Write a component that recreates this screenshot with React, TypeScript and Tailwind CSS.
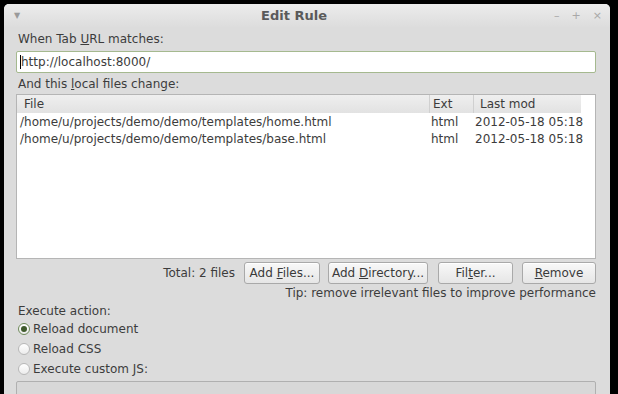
import React from "react"

const font = { fontFamily: '"DejaVu Sans", Verdana, sans-serif' }

function Btn({ children, w }: { children: React.ReactNode; w: string }) {
  return (
    <button
      className={`${w} h-[22px] shrink-0 whitespace-nowrap rounded-[3px] border border-[#a9a9a9] bg-gradient-to-b from-[#f8f8f8] to-[#e6e6e6] text-[12px] text-[#3a3a3a] leading-none shadow-[inset_0_1px_0_#fff]`}
    >
      {children}
    </button>
  )
}

function Radio({ checked, label }: { checked?: boolean; label: string }) {
  return (
    <div className="flex items-center h-[20px] gap-[3px]">
      <span
        className={`w-[12px] h-[12px] rounded-full border flex items-center justify-center bg-gradient-to-b from-[#ffffff] to-[#ececec] ${
          checked ? "border-[#6f8a5a]" : "border-[#b8b8b8]"
        }`}
      >
        {checked && <span className="w-[6px] h-[6px] rounded-full bg-[#3f5a2c]" />}
      </span>
      <span>{label}</span>
    </div>
  )
}

export default function App() {
  return (
    <div className="w-[618px] h-[394px] bg-black overflow-hidden pl-[4px] pt-[4px]" style={font}>
      <div className="w-[606px] h-[390px] bg-[#dcdcdc] rounded-t-[5px] flex flex-col text-[12px] text-[#3c3c3c]">
        {/* Title bar */}
        <div className="h-[24px] shrink-0 flex items-center pl-[10px] pr-[8px] rounded-t-[5px] bg-gradient-to-b from-[#ececec] to-[#dcdcdc]">
          <span className="w-[20px] text-[8px] text-[#9a9a9a]">▼</span>
          <div className="flex-1 text-center font-bold text-[13px] text-[#5a5a5a]">Edit Rule</div>
          <div className="flex gap-[12px] text-[11px] text-[#a8a8a8]">
            <span>–</span>
            <span>+</span>
            <span>×</span>
          </div>
        </div>

        <div className="flex flex-col pl-[12px] pr-[14px]">
          <div className="mt-[3px] h-[16px] leading-[16px] pl-[2px]">
            When Tab <u>U</u>RL matches:
          </div>
          <div className="mt-[4px] h-[22px] rounded-[2px] border border-[#a5b98f] bg-white flex items-center px-[3px]">
            <span className="w-px h-[14px] bg-black" />
            http://localhost:8000/
          </div>
          <div className="mt-[3px] h-[16px] leading-[16px] pl-[2px]">
            And this <u>l</u>ocal files change:
          </div>

          {/* File list */}
          <div className="mt-[2px] h-[165px] border border-[#b5b5b5] bg-white flex flex-col">
            <div className="h-[18px] flex items-center bg-gradient-to-b from-[#efefef] to-[#e2e2e2] mr-[14px]">
              <div className="flex-1 pl-[7px] border-r border-[#d0d0d0] h-full flex items-center">File</div>
              <div className="w-[44px] pl-[3px] border-r border-[#d0d0d0] h-full flex items-center">Ext</div>
              <div className="w-[107px] pl-[6px] h-full flex items-center">Last mod</div>
            </div>
            {[
              "/home/u/projects/demo/demo/templates/home.html",
              "/home/u/projects/demo/demo/templates/base.html",
            ].map((f) => (
              <div key={f} className="h-[17px] flex items-center mr-[14px] whitespace-nowrap">
                <div className="flex-1 pl-[3px]">{f}</div>
                <div className="w-[44px] pl-[1px]">html</div>
                <div className="w-[107px] pl-[1px]">2012-05-18 05:18</div>
              </div>
            ))}
          </div>

          {/* Buttons */}
          <div className="mt-[3px] flex items-center justify-end">
            <span className="mr-[9px]">Total: 2 files</span>
            <Btn w="w-[76px] mr-[8px]">
              Add <u>F</u>iles...
            </Btn>
            <Btn w="w-[100px] mr-[10px]">
              Add <u>D</u>irectory...
            </Btn>
            <Btn w="w-[75px] mr-[9px]">
              Fil<u>t</u>er...
            </Btn>
            <Btn w="w-[74px]">
              <u>R</u>emove
            </Btn>
          </div>
          <div className="mt-[1px] h-[16px] leading-[16px] text-right">
            Tip: remove irrelevant files to improve performance
          </div>

          <div className="mt-[2px] h-[16px] leading-[16px] pl-[2px]">Execute action:</div>
          <div className="flex flex-col pl-[2px]">
            <Radio checked label="Reload document" />
            <Radio label="Reload CSS" />
            <Radio label="Execute custom JS:" />
          </div>
          <div className="mt-[2px] h-[30px] border border-[#b0b0b0] rounded-[2px] bg-[#d8d8d8]" />
        </div>
      </div>
    </div>
  )
}
